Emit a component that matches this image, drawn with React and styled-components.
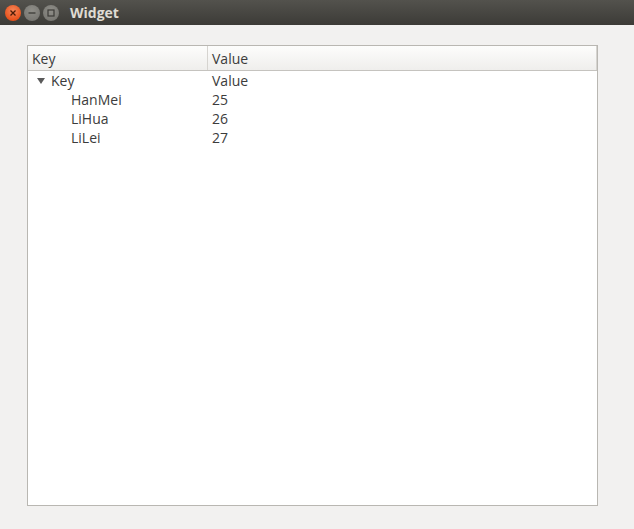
import React from 'react';
import styled, { createGlobalStyle } from 'styled-components';

const GlobalStyle = createGlobalStyle`
  html, body { margin: 0; padding: 0; }
  body {
    width: 634px;
    height: 529px;
    overflow: hidden;
    background: #f2f1f0;
    font-family: "Open Sans", "Noto Sans", "DejaVu Sans", sans-serif;
  }
`;

const Window = styled.div`
  width: 634px;
  height: 529px;
  display: flex;
  flex-direction: column;
  background: #f2f1f0;
`;

const TitleBar = styled.div`
  height: 25px;
  flex: none;
  display: flex;
  align-items: center;
  padding-left: 5px;
  background: linear-gradient(#53524d, #3c3b37);
  box-sizing: border-box;
`;

const WinButton = styled.div`
  flex: none;
  width: 16px;
  height: 16px;
  border-radius: 50%;
  margin-right: ${p => p.$gap}px;
  display: flex;
  align-items: center;
  justify-content: center;
  background: ${p => p.$close
    ? 'radial-gradient(circle at 50% 35%, #f6875a 0%, #e8531d 70%, #d94812 100%)'
    : 'radial-gradient(circle at 50% 35%, #8f8e88 0%, #7a7974 70%, #6a6964 100%)'};
`;

const Title = styled.div`
  margin-left: 11px;
  color: #dfdbd2;
  font-family: "Open Sans", "Noto Sans", sans-serif;
  font-weight: 700;
  font-size: 14px;
`;

const Body = styled.div`
  flex: 1;
  padding: 20px 36px 23px 27px;
  display: flex;
`;

const Tree = styled.div`
  flex: 1;
  border: 1px solid #b9b7b2;
  background: #fff;
  display: flex;
  flex-direction: column;
`;

const Header = styled.div`
  height: 25px;
  display: grid;
  grid-template-columns: 180px 1fr;
  background: linear-gradient(#fdfdfc, #efeeec);
  border-bottom: 1px solid #c5c3bf;
  box-sizing: border-box;
`;

const HeaderCell = styled.div`
  display: flex;
  align-items: center;
  padding-left: 4px;
  font-size: 14px;
  color: #3c3c3c;
  border-right: 1px solid #d6d4d0;
`;

const Row = styled.div`
  height: 19px;
  display: grid;
  grid-template-columns: 180px 1fr;
  align-items: center;
  font-size: 14px;
  color: #3c3c3c;
`;

const KeyCell = styled.div`
  display: flex;
  align-items: center;
  padding-left: ${p => p.$indent}px;
`;

const ValueCell = styled.div`
  padding-left: 4px;
`;

const Arrow = styled.svg`
  width: 8px;
  height: 6px;
  margin-right: 6px;
`;

const rows = [
  { key: 'HanMei', value: '25' },
  { key: 'LiHua', value: '26' },
  { key: 'LiLei', value: '27' },
];

export default function App() {
  return (
    <Window>
      <GlobalStyle />
      <TitleBar>
        <WinButton $close $gap={3}>
          <svg width="8" height="8" viewBox="0 0 8 8">
            <path d="M1.5 1.5L6.5 6.5M6.5 1.5L1.5 6.5" stroke="#4a1c08" strokeWidth="1.3" />
          </svg>
        </WinButton>
        <WinButton $gap={3}>
          <svg width="8" height="8" viewBox="0 0 8 8">
            <path d="M0.5 4H7.5" stroke="#3c3b37" strokeWidth="1.3" />
          </svg>
        </WinButton>
        <WinButton $gap={0}>
          <svg width="8" height="8" viewBox="0 0 8 8">
            <rect x="1" y="1" width="6" height="6" fill="none" stroke="#3c3b37" strokeWidth="1.2" />
          </svg>
        </WinButton>
        <Title>Widget</Title>
      </TitleBar>
      <Body>
        <Tree>
          <Header>
            <HeaderCell>Key</HeaderCell>
            <HeaderCell>Value</HeaderCell>
          </Header>
          <Row>
            <KeyCell $indent={9}>
              <Arrow viewBox="0 0 8 6">
                <path d="M0 0H8L4 6Z" fill="#5a5a5a" />
              </Arrow>
              Key
            </KeyCell>
            <ValueCell>Value</ValueCell>
          </Row>
          {rows.map(r => (
            <Row key={r.key}>
              <KeyCell $indent={43}>{r.key}</KeyCell>
              <ValueCell>{r.value}</ValueCell>
            </Row>
          ))}
        </Tree>
      </Body>
    </Window>
  );
}
